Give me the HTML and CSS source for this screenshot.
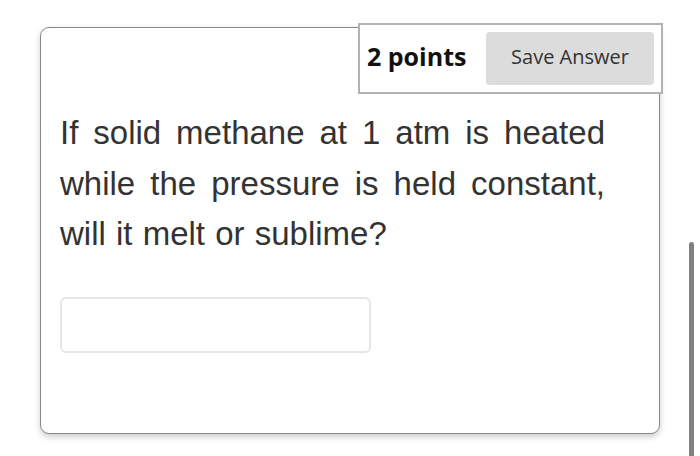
FILE: index.html
```html
<!DOCTYPE html>
<html>
<head>
<meta charset="utf-8">
<link rel="stylesheet" href="styles.css">
</head>
<body>
<div class="page">
  <div class="card">
    <div class="points-box">
      <span class="points">2 points</span>
      <button class="save-btn">Save Answer</button>
    </div>
    <p class="question">If solid methane at 1 atm is heated while the pressure is held constant, will it melt or sublime?</p>
    <div class="answer"></div>
  </div>
  <div class="scrollbar"></div>
</div>
</body>
</html>
```
FILE: styles.css
```css
html, body {
  margin: 0;
  padding: 0;
  background: #ffffff;
}
.page {
  position: relative;
  width: 700px;
  height: 456px;
  overflow: hidden;
  padding: 27px 0 0 40px;
  box-sizing: border-box;
}
.card {
  position: relative;
  width: 620px;
  height: 407px;
  box-sizing: border-box;
  border: 1px solid #888;
  border-radius: 9px;
  background: #fff;
  box-shadow: 0 3px 6px rgba(0, 0, 0, 0.2);
  padding: 80px 0 0 19px;
}
.points-box {
  position: absolute;
  top: -5px;
  right: -4px;
  display: flex;
  align-items: center;
  gap: 21px;
  padding: 7px;
  border: 2px solid #b3b3b3;
  background: #fff;
}
.points {
  font-family: "Open Sans", sans-serif;
  font-weight: 700;
  font-size: 25px;
  color: #111;
  width: 98px;
  white-space: nowrap;
  margin-bottom: 5px;
}
.save-btn {
  width: 168px;
  height: 53px;
  border: none;
  border-radius: 4px;
  background: #dcdcdc;
  color: #333;
  font-family: "Open Sans", sans-serif;
  font-size: 20px;
  padding: 0 0 4px 0;
}
.question {
  margin: 0;
  width: 545px;
  font-family: "Liberation Sans", Arial, sans-serif;
  font-size: 33px;
  line-height: 50.5px;
  word-spacing: 1px;
  color: #333;
  text-align: justify;
}
.answer {
  margin-top: 37px;
  width: 311px;
  height: 56px;
  box-sizing: border-box;
  border: 2px solid #e6e6e6;
  border-radius: 6px;
}
.scrollbar {
  position: absolute;
  left: 689px;
  top: 242px;
  width: 5px;
  height: 230px;
  border-radius: 3px;
  background: #808080;
}
```
